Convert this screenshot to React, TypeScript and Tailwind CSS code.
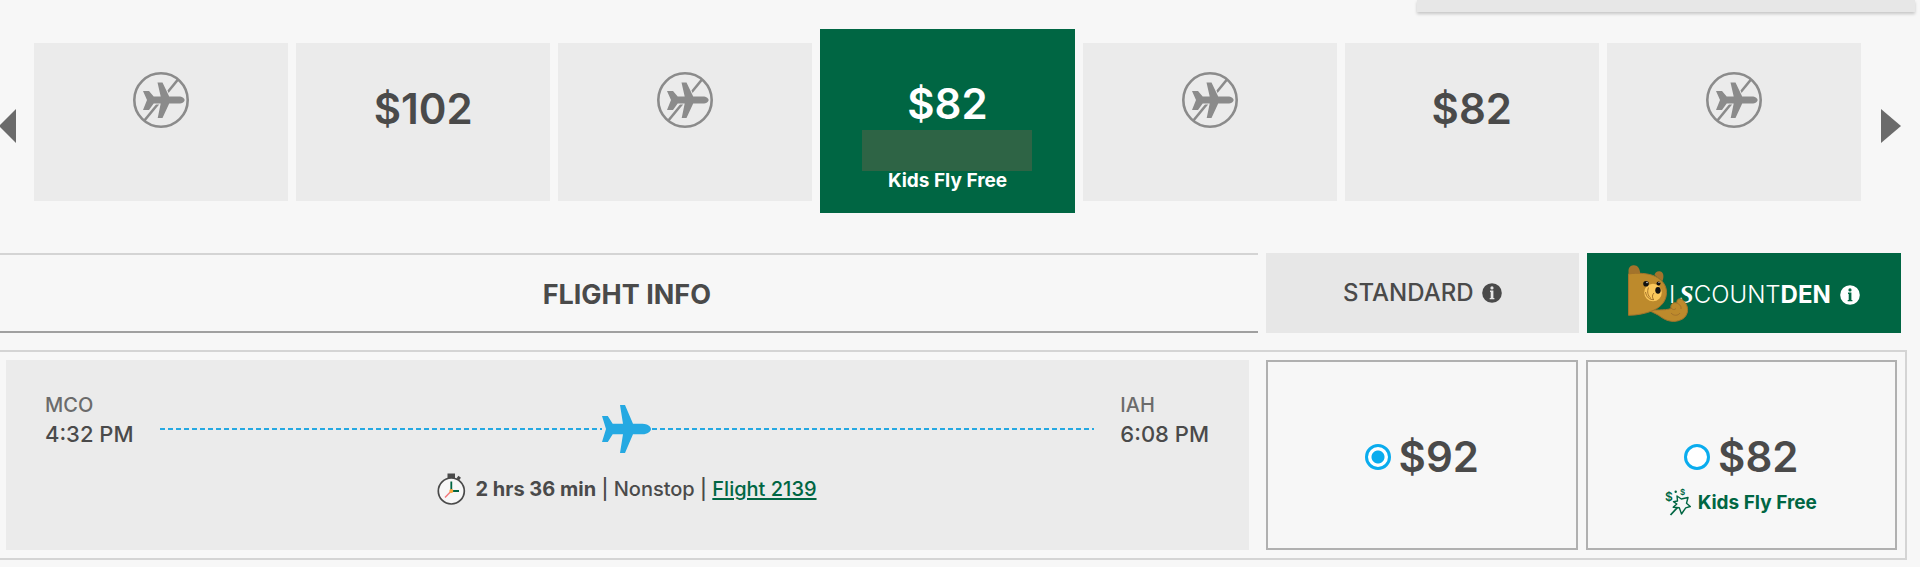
type Fare = { price?: string; selected?: boolean; note?: string };

const FARES: Fare[] = [
  {},
  { price: '$102' },
  {},
  { price: '$82', selected: true, note: 'Kids Fly Free' },
  {},
  { price: '$82' },
  {},
];

function NoFlightIcon() {
  return (
    <svg viewBox="0 0 56 56" className="h-14 w-14" role="img" aria-label="No flights">
      <circle cx="28" cy="28" r="26.7" fill="none" stroke="#8b8b8b" strokeWidth="2.6" />
      <path d="M45 7.5 L11 49" stroke="#8b8b8b" strokeWidth="2.6" />
      <path
        d="M24.5 10.500h5l6.700 14h9.800c3.200 0 5.600 1.800 5.600 3.500s-2.400 3.600-5.600 3.600h-9.800L29.500 46h-4.800l3-14.400h-7L16 38h-6l4-10-4-9h6l4.700 5.600h7z"
        fill="#8b8b8b"
        stroke="#ebebeb"
        strokeWidth="2"
        style={{ paintOrder: 'stroke' }}
      />
    </svg>
  );
}

function PlaneIcon() {
  return (
    <svg viewBox="0 0 50 48" className="h-12 w-[50px]" aria-hidden="true">
      <path
        d="M18 0h5l8 18.7h9.5c5 0 8.5 2.9 8.5 5.3s-3.500 5.300-8.500 5.300H31L23 48h-5l3-18.700H10.700L5.800 37H0l4-13-4-13h5.800l4.900 7.700H21z"
        fill="#25a9e2"
      />
    </svg>
  );
}

function StopwatchIcon() {
  return (
    <svg viewBox="0 0 29 32" className="h-8 w-[29px]" aria-hidden="true">
      <rect x="10.500" y="0.500" width="7.500" height="5" fill="#4a4a4a" />
      <path d="M20.500 4l2.500 2" stroke="#4a4a4a" strokeWidth="3" />
      <circle cx="14.300" cy="18" r="13" fill="#f7f7f7" stroke="#4a4a4a" strokeWidth="1.700" />
      <path d="M14.300 18L8 24.500" stroke="#f2777a" strokeWidth="1.400" />
      <path d="M14.300 18V8.500M14.300 18H22" stroke="#006643" strokeWidth="1.800" />
      <circle cx="14.300" cy="18" r="2" fill="#f9a63a" />
    </svg>
  );
}

function InfoIcon({ disc, mark }: { disc: string; mark: string }) {
  return (
    <svg viewBox="0 0 20 20" className="h-5 w-5" aria-hidden="true">
      <circle cx="10" cy="10" r="9.800" fill={disc} />
      <circle cx="10" cy="4.900" r="1.600" fill={mark} />
      <path d="M8 7.600h3.400v7.400h1v1.300H7.700V15h1V8.900H8z" fill={mark} />
    </svg>
  );
}

function BearIcon() {
  return (
    <svg viewBox="0 0 62 57" className="absolute left-0 top-0 h-[57px] w-[62px]" aria-hidden="true">
      <path d="M.5 10V5C1 1.500 3.500.3 6 .3c3.500 0 6 3.200 6.200 8.700z" fill="#a3732b" />
      <path d="M26.500 10c.5-2.800 2.500-4 5-3.800 3.500.3 5 4 3 9.800z" fill="#a3732b" />
      <path
        d="M22 46c5-2 14 0 21-2.500-1-4 2-6.800 6-5.500-1-4.500 4-6 7-1.500 5.500 5 4.500 14-1.500 17.500-8 4.500-16 2-21.500-2-4-3-7-4-11-6z"
        fill="#bd8a2c"
        stroke="#a3732b"
      />
      <path
        d="M.5 9c9-1.500 20-.8 27 2.500 7 3.500 11 9 11 16C38.500 36 33 42 25 45.500 18 48.500 9 50.300.5 50.300z"
        fill="#bd8a2c"
        stroke="#a3732b"
      />
      <path d="M43 43c2 2 3.500 2 5 .5M48.500 38c2.500 1 5 2.500 4.500 6M43 48c2.500 3 7 3 9 0" fill="none" stroke="#a3732b" />
      <ellipse cx="25" cy="27.500" rx="8.800" ry="8.700" fill="#fac75b" />
      <path d="M17.500 27c1 5.500 4 7.500 8 7.700M26 28c-2 2-2 4-.3 7M20.500 22.500c-1.500 4-1 8 2.500 11" fill="none" stroke="#9a6a25" strokeWidth=".9" />
      <ellipse cx="30" cy="25.300" rx="2.700" ry="3.400" fill="#111" />
      <circle cx="18" cy="18.800" r="2.800" fill="#111" />
      <circle cx="30.500" cy="18.500" r="2" fill="#111" />
      <circle cx="19" cy="17.500" r=".7" fill="#fff" />
      <circle cx="31" cy="17.500" r=".6" fill="#fff" />
    </svg>
  );
}

function WandIcon() {
  return (
    <svg viewBox="0 0 26 27" className="h-[27px] w-[26px] overflow-visible" aria-hidden="true">
      <path
        d="M11 7l4.300 3L22 8.500l-1.500 5.700 3.800 3.300-4.600 1.300L15.500 25l-2.200-6.300-6.100-.4 3.600-3.300-3.300-2.300 4-.7z"
        fill="none"
        stroke="#006643"
        strokeWidth="1.400"
        strokeLinejoin="round"
      />
      <path d="M11.500 18.500L4.500 26" stroke="#006643" strokeWidth="1.800" />
      <circle cx="9.700" cy="2.800" r="1.200" fill="#006643" />
      <text x="-1" y="12" fontSize="12" fontWeight="600" fill="#006643" fontFamily="Inter, sans-serif">$</text>
      <text x="14" y="6" fontSize="8" fontWeight="600" fill="#006643" fontFamily="Inter, sans-serif">$</text>
    </svg>
  );
}

function FareCard({ fare }: { fare: Fare }) {
  if (fare.selected) {
    return (
      <button className="flex h-[184px] min-w-0 flex-1 flex-col items-center bg-[#006643] pt-[51px] text-white">
        <span className="text-[42px] font-semibold leading-[48px]">{fare.price}</span>
        <span className="mt-[2px] h-[41px] w-[170px] bg-[#2e6445]" />
        <span className="text-[19px] font-bold leading-5">{fare.note}</span>
      </button>
    );
  }
  return (
    <button className="mb-3 flex h-[158px] min-w-0 flex-1 flex-col items-center bg-[#ebebeb]">
      {fare.price ? (
        <span className="mt-[42px] text-[42px] font-semibold leading-[48px]">{fare.price}</span>
      ) : (
        <span className="mt-[29px]">
          <NoFlightIcon />
        </span>
      )}
    </button>
  );
}

function FareOption({ id, price, checked, note }: { id: string; price: string; checked?: boolean; note?: string }) {
  return (
    <div className="flex min-w-0 flex-1 flex-col items-center border-2 border-[#b0b0b0] pt-[71px]">
      <label htmlFor={id} className="flex items-center gap-2 text-[42px] font-semibold leading-[48px]">
        <input
          id={id}
          type="radio"
          name="fare"
          defaultChecked={checked}
          className="h-[26px] w-[26px] appearance-none rounded-full border-[3px] border-[#0aacee] bg-white checked:bg-[radial-gradient(circle,#0aacee_0_6px,#fff_7px)]"
        />
        {price}
      </label>
      {note && (
        <div className="mt-2 flex items-center gap-[6px] text-[19px] font-bold leading-[27px] text-[#006643]">
          <WandIcon />
          {note}
        </div>
      )}
    </div>
  );
}

function Stop({ code, time }: { code: string; time: string }) {
  return (
    <div className="shrink-0 font-medium">
      <div className="text-[20px] leading-6 text-[#6b6b6b]">{code}</div>
      <div className="mt-[3px] text-[22px] leading-7">{time}</div>
    </div>
  );
}

export default function App() {
  return (
    <main className="min-h-screen overflow-hidden bg-[#f7f7f7] font-['Inter',sans-serif] text-[#4a4a4a]">
      <div className="flex justify-end pr-[5px]">
        <div className="h-3 w-[498px] bg-[#e7e7e7] shadow-[0_2px_3px_rgba(0,0,0,0.2)]" />
      </div>

      <section aria-label="Fares by day" className="mt-[17px] flex items-end pr-[19px]">
        <button aria-label="Earlier days" className="mb-[70px] mr-[18px]">
          <svg viewBox="0 0 16 34" className="h-[34px] w-4">
            <path d="M16 0v34L-1 17z" fill="#6b6b6b" />
          </svg>
        </button>
        <div className="flex min-w-0 flex-1 items-end gap-2">
          {FARES.map((fare, i) => (
            <FareCard key={i} fare={fare} />
          ))}
        </div>
        <button aria-label="Later days" className="mb-[70px] ml-5">
          <svg viewBox="0 0 20 34" className="h-[34px] w-5">
            <path d="M0 0v34l20-17z" fill="#6b6b6b" />
          </svg>
        </button>
      </section>

      <section className="mt-10 grid h-20 grid-cols-[1257fr_313fr_314fr] gap-2 pr-[19px]">
        <h2 className="flex min-w-0 items-center justify-center border-b-2 border-t-2 border-b-[#a0a0a0] border-t-[#d4d4d4] pr-1 pt-1 text-[27px] font-bold">
          FLIGHT INFO
        </h2>
        <div className="flex min-w-0 items-center justify-center gap-2 bg-[#e7e7e7] text-[24px] font-medium">
          STANDARD
          <InfoIcon disc="#4a4a4a" mark="#e7e7e7" />
        </div>
        <div className="flex min-w-0 items-center justify-center bg-[#006643] text-white">
          <div className="relative flex h-[57px] items-center pl-[41px] pt-1 text-[24px] font-light leading-7">
            <span>I</span>
            <span className="ml-1 font-['Liberation_Serif',serif] text-[26px] font-bold italic">S</span>
            <span>COUNT</span>
            <span className="font-bold">DEN</span>
            <BearIcon />
            <span className="ml-[9px]">
              <InfoIcon disc="#ffffff" mark="#006643" />
            </span>
          </div>
        </div>
      </section>

      <section className="mr-[13px] mt-[17px] grid grid-cols-[1243fr_631fr] gap-[17px] border-y-2 border-r-2 border-[#d4d4d4] py-2 pl-[6px] pr-2">
        <div className="h-[190px] min-w-0 bg-[#ebebeb] pl-[39px] pr-10 pt-[33px]">
          <div className="flex">
            <Stop code="MCO" time="4:32 PM" />
            <div className="mx-[26px] mt-3 flex h-12 flex-1 items-center">
              <div className="h-[2px] flex-1 bg-[repeating-linear-gradient(90deg,#25a9e2_0_5px,transparent_5px_8px)]" />
              <PlaneIcon />
              <div className="h-[2px] flex-1 bg-[repeating-linear-gradient(90deg,#25a9e2_0_5px,transparent_5px_8px)]" />
            </div>
            <Stop code="IAH" time="6:08 PM" />
          </div>
          <div className="mt-5 flex items-center justify-center text-[20px] leading-8">
            <StopwatchIcon />
            <p className="ml-[9px] font-medium">
              <strong className="font-bold">2 hrs 36 min</strong> | Nonstop |{' '}
              <a href="#flight-2139" className="text-[#006643] underline underline-offset-2">
                Flight 2139
              </a>
            </p>
          </div>
        </div>
        <div className="flex min-w-0 gap-2">
          <FareOption id="fare-standard" price="$92" checked />
          <FareOption id="fare-den" price="$82" note="Kids Fly Free" />
        </div>
      </section>
    </main>
  );
}
